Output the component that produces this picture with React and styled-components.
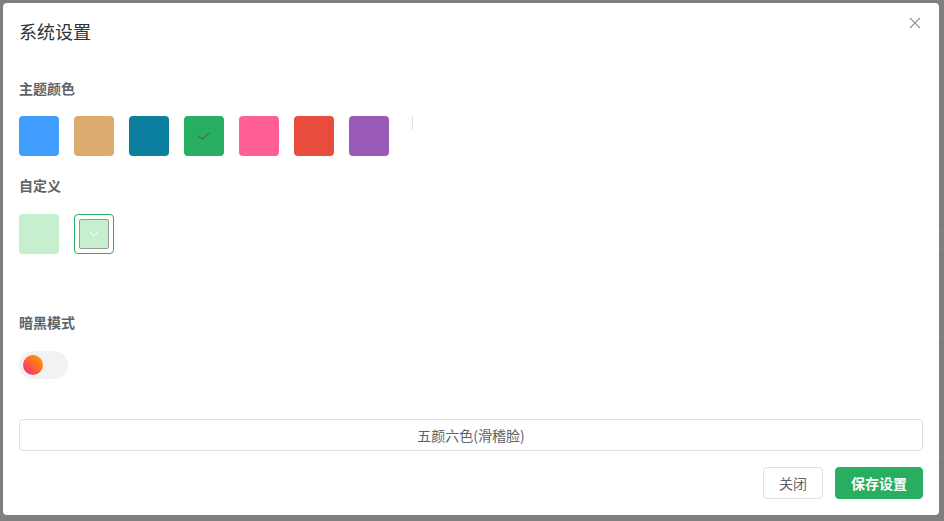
import React, { useState } from 'react'
import styled, { createGlobalStyle } from 'styled-components'

const GlobalStyle = createGlobalStyle`
  html, body {
    margin: 0;
    padding: 0;
    height: 100%;
    font-family: "Noto Sans CJK SC", "Noto Sans", sans-serif;
  }
`

const Page = styled.div`
  height: 521px;
  background: #fff;
  overflow: hidden;
`

const TableRow = styled.div`
  height: ${(p) => p.h}px;
  border-bottom: 1px solid #ebeef5;
  box-sizing: border-box;
`

const Overlay = styled.div`
  position: fixed;
  inset: 0;
  background: rgba(0, 0, 0, 0.5);
  padding: 3px 5px 6px 3px;
  box-sizing: border-box;
  display: flex;
`

const Dialog = styled.div`
  flex: 1;
  background: #fff;
  border-radius: 4px;
  padding: 16px 16px 16px;
  box-sizing: border-box;
  display: flex;
  flex-direction: column;
`

const Header = styled.div`
  display: flex;
  justify-content: space-between;
  align-items: flex-start;
  height: 24px;
`

const Title = styled.div`
  font-size: 18px;
  line-height: 24px;
  color: #303133;
`

const CloseBtn = styled.button`
  border: 0;
  background: none;
  padding: 0;
  margin: -2px 2px 0 0;
  width: 12px;
  height: 12px;
  cursor: pointer;
  display: flex;
`

const Label = styled.div`
  font-size: 14px;
  line-height: 20px;
  font-weight: 700;
  color: #606266;
  margin-top: ${(p) => p.mt}px;
`

const SwatchRow = styled.div`
  display: flex;
  align-items: flex-start;
  gap: 15px;
  margin-top: ${(p) => p.mt}px;
`

const Swatch = styled.div`
  width: 40px;
  height: 40px;
  border-radius: 4px;
  background: ${(p) => p.color};
  display: flex;
  align-items: center;
  justify-content: center;
  cursor: pointer;
`

const Divider = styled.div`
  width: 1px;
  height: 14px;
  background: #dcdfe6;
  margin-left: 8px;
`

const Picker = styled.div`
  width: 40px;
  height: 40px;
  border: 1px solid #27ae60;
  border-radius: 4px;
  box-sizing: border-box;
  padding: 4px;
`

const PickerInner = styled.div`
  height: 100%;
  border: 1px solid #999;
  border-radius: 2px;
  box-sizing: border-box;
  background: #c5efce;
  display: flex;
  align-items: center;
  justify-content: center;
`

const SwitchTrack = styled.div`
  width: 49px;
  height: 28px;
  border-radius: 14px;
  background: #f2f2f2;
  margin-top: ${(p) => p.mt}px;
  padding: 4px;
  box-sizing: border-box;
  cursor: pointer;
`

const Knob = styled.div`
  width: 20px;
  height: 20px;
  border-radius: 50%;
  background: linear-gradient(to bottom left, #ff9500 15%, #ff2d74 90%);
`

const WideButton = styled.button`
  margin-top: 40px;
  height: 32px;
  border: 1px solid #dcdfe6;
  border-radius: 4px;
  background: #fff;
  color: #606266;
  font-family: inherit;
  font-size: 14px;
  line-height: 28px;
  padding: 0 0 1px;
  cursor: pointer;
`

const Footer = styled.div`
  margin-top: 16px;
  display: flex;
  justify-content: flex-end;
  gap: 12px;
`

const Button = styled.button`
  height: 32px;
  padding: 0 15px;
  border-radius: 4px;
  font-family: inherit;
  font-size: 14px;
  font-weight: ${(p) => (p.primary ? 700 : 400)};
  border: 1px solid ${(p) => (p.primary ? '#27ae60' : '#dcdfe6')};
  background: ${(p) => (p.primary ? '#27ae60' : '#fff')};
  color: ${(p) => (p.primary ? '#fff' : '#606266')};
  cursor: pointer;
`

const themeColors = ['#409eff', '#daaa6f', '#0c7f9f', '#27ae60', '#ff5f94', '#e84c3d', '#9b59b6']

const Check = () => (
  <svg width="14" height="12" viewBox="0 0 14 12" fill="none">
    <path d="M1.5 5.8 L5.2 9.2 L12.3 2.8" stroke="#5f6368" strokeWidth="1.3" />
  </svg>
)

const Chevron = () => (
  <svg width="10" height="6" viewBox="0 0 10 6" fill="none">
    <path d="M1 1 L5 5 L9 1" stroke="#fff" strokeWidth="1" />
  </svg>
)

export default function App() {
  const [active, setActive] = useState(3)
  const rows = [75, 32, 118, 31, 88, 60, 60]
  return (
    <Page>
      <GlobalStyle />
      {rows.map((h, i) => (
        <TableRow key={i} h={h} />
      ))}
      <Overlay>
        <Dialog>
          <Header>
            <Title>系统设置</Title>
            <CloseBtn aria-label="close">
              <svg width="12" height="12" viewBox="0 0 12 12">
                <path d="M1 1 L11 11 M11 1 L1 11" stroke="#909399" strokeWidth="1.1" />
              </svg>
            </CloseBtn>
          </Header>

          <Label mt={35}>主题颜色</Label>
          <SwatchRow mt={18}>
            {themeColors.map((c, i) => (
              <Swatch key={c} color={c} onClick={() => setActive(i)}>
                {active === i && <Check />}
              </Swatch>
            ))}
            <Divider />
          </SwatchRow>

          <Label mt={19}>自定义</Label>
          <SwatchRow mt={19}>
            <Swatch color="#c5efce" />
            <Picker>
              <PickerInner>
                <Chevron />
              </PickerInner>
            </Picker>
          </SwatchRow>

          <Label mt={58}>暗黑模式</Label>
          <div>
            <SwitchTrack mt={19}>
              <Knob />
            </SwitchTrack>
          </div>

          <WideButton>五颜六色(滑稽脸)</WideButton>

          <Footer>
            <Button>关闭</Button>
            <Button primary>保存设置</Button>
          </Footer>
        </Dialog>
      </Overlay>
    </Page>
  )
}
